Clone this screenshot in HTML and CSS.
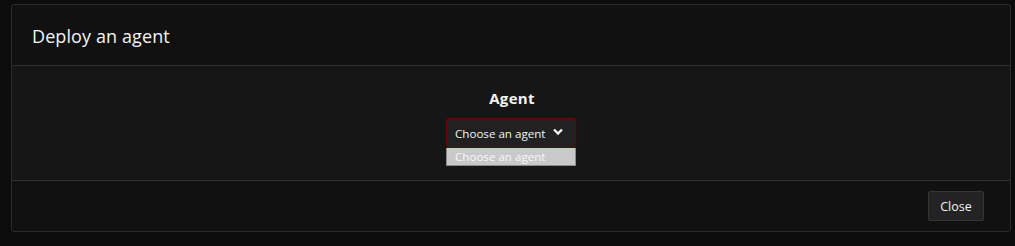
FILE: index.html
```html
<!DOCTYPE html>
<html>
<head>
<meta charset="utf-8">
<link rel="stylesheet" href="styles.css">
</head>
<body>
<div class="modal">
  <div class="modal-header">
    <h4 class="modal-title">Deploy an agent</h4>
  </div>
  <div class="modal-body">
    <label class="field-label">Agent</label>
    <div class="select-wrap">
      <div class="select">
        <span class="select-text">Choose an agent</span>
        <svg class="chev" width="10" height="8" viewBox="0 0 10 8"><path d="M1 1.5 L5 5.5 L9 1.5" fill="none" stroke="#f2f2f2" stroke-width="2.4"/></svg>
      </div>
      <div class="options">
        <div class="option selected">Choose an agent</div>
      </div>
    </div>
  </div>
  <div class="modal-footer">
    <button class="btn">Close</button>
  </div>
</div>
</body>
</html>
```
FILE: styles.css
```css
html, body {
  margin: 0;
  padding: 0;
  background: #0c0c0c;
  font-family: "Open Sans", "Noto Sans", sans-serif;
  color: #f0f0f0;
}
body {
  padding: 4px 4px 0 11px;
}
.modal {
  width: 998px;
  border: 1px solid #2b2b2b;
  border-radius: 3px;
  background: #111111;
}
.modal-header {
  height: 61px;
  box-sizing: border-box;
  padding: 0 20px;
  display: flex;
  align-items: center;
  border-bottom: 1px solid #2f2f2f;
}
.modal-title {
  margin: 0;
  font-size: 18px;
  font-weight: 400;
  color: #f4f4f4;
  padding-top: 1px;
  letter-spacing: 0.1px;
}
.modal-body {
  background: #161616;
  height: 115px;
  box-sizing: border-box;
  display: flex;
  flex-direction: column;
  align-items: center;
  padding-top: 22px;
  border-bottom: 1px solid #2f2f2f;
}
.field-label {
  font-size: 15px;
  font-weight: 700;
  color: #f4f4f4;
  line-height: 20px;
  margin-left: 2px;
  letter-spacing: 0.3px;
}
.select-wrap {
  margin-top: 10px;
  width: 130px;
}
.select {
  box-sizing: border-box;
  height: 30px;
  border: 1px solid #6e0000;
  border-radius: 3px;
  background: #212121;
  box-shadow: 0 0 2px rgba(120,0,0,0.6);
  display: flex;
  align-items: center;
  padding: 0 12px 0 8px;
  justify-content: space-between;
}
.select-text {
  font-size: 11.6px;
  color: #f2f2f2;
  white-space: nowrap;
}
.chev {
  margin-top: -2px;
}
.options {
  box-sizing: border-box;
  height: 18px;
  background: #c9c9c9;
  border: 1px solid #8a8a8a;
  border-top: none;
}
.option {
  font-size: 11.6px;
  line-height: 17px;
  color: #f8f8f8;
  padding-left: 8px;
  white-space: nowrap;
}
.modal-footer {
  height: 50px;
  display: flex;
  justify-content: flex-end;
  align-items: center;
  padding: 0 26px;
}
.btn {
  font-family: "Open Sans", "Noto Sans", sans-serif;
  font-size: 12.5px;
  color: #f2f2f2;
  background: #232323;
  border: 1px solid #353535;
  border-radius: 2px;
  width: 56px;
  height: 30px;
  padding: 0;
  margin-top: 0;
}
```
